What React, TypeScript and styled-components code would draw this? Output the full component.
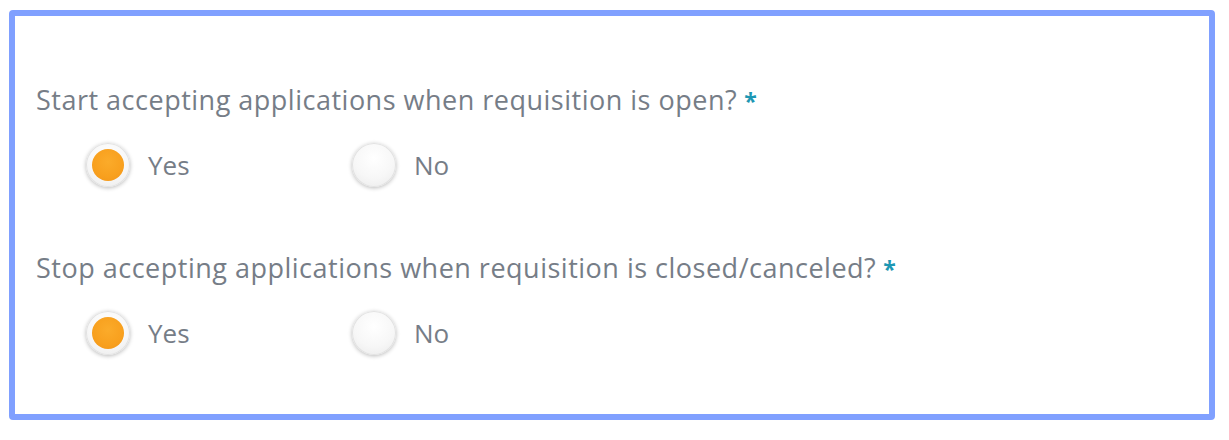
import { useState } from 'react';
import styled, { createGlobalStyle } from 'styled-components';

const GlobalStyle = createGlobalStyle`
  html, body {
    margin: 0;
    padding: 0;
    background: #ffffff;
  }
  body {
    font-family: "Open Sans", Lato, "Liberation Sans", sans-serif;
  }
`;

const Frame = styled.div`
  box-sizing: border-box;
  width: 1206px;
  height: 410px;
  margin: 10px 0 0 9px;
  border: 6px solid #80a0ff;
  border-radius: 4px;
  padding: 68px 20px 0 21px;
  display: flex;
  flex-direction: column;
  gap: 63px;
`;

const Question = styled.fieldset`
  border: 0;
  margin: 0;
  padding: 0;
  display: flex;
  flex-direction: column;
  gap: 24px;
`;

const Label = styled.legend`
  padding: 0;
  margin: 0;
  font-size: 27px;
  line-height: 32px;
  letter-spacing: 0.5px;
  color: #767d87;
  float: left;
  width: 100%;
`;

const Required = styled.span`
  color: #1d97b3;
  font-weight: 700;
  font-size: 23px;
  margin-left: 7px;
`;

const Options = styled.div`
  display: flex;
  padding-left: 50px;
  clear: both;
`;

const Option = styled.label`
  display: flex;
  align-items: center;
  gap: 18px;
  width: 266px;
  height: 48px;
  cursor: pointer;
  font-size: 26px;
  color: #767d87;
`;

const RadioInput = styled.input.attrs({ type: 'radio' })`
  appearance: none;
  margin: 0;
  width: 44px;
  height: 44px;
  border-radius: 50%;
  background: radial-gradient(circle at 50% 35%, #ffffff 0%, #f7f7f7 55%, #e9e9e9 100%);
  box-shadow: 0 1px 4px rgba(0, 0, 0, 0.28), inset 0 0 0 1px #e2e2e2;
  display: grid;
  place-items: center;
  cursor: pointer;

  &::after {
    content: '';
    width: 32px;
    height: 32px;
    border-radius: 50%;
    background: radial-gradient(circle at 50% 40%, #fbab2a 0%, #f8a01e 60%, #f29418 100%);
    transform: scale(0);
  }

  &:checked::after {
    transform: scale(1);
  }
`;

type RadioGroupProps = {
  name: string;
  question: string;
};

function RadioGroup({ name, question }: RadioGroupProps) {
  const [value, setValue] = useState('yes');

  return (
    <Question>
      <Label>
        {question}
        <Required>*</Required>
      </Label>
      <Options>
        <Option>
          <RadioInput name={name} checked={value === 'yes'} onChange={() => setValue('yes')} />
          Yes
        </Option>
        <Option>
          <RadioInput name={name} checked={value === 'no'} onChange={() => setValue('no')} />
          No
        </Option>
      </Options>
    </Question>
  );
}

export default function App() {
  return (
    <>
      <GlobalStyle />
      <Frame>
        <RadioGroup name="start" question="Start accepting applications when requisition is open?" />
        <RadioGroup name="stop" question="Stop accepting applications when requisition is closed/canceled?" />
      </Frame>
    </>
  );
}
